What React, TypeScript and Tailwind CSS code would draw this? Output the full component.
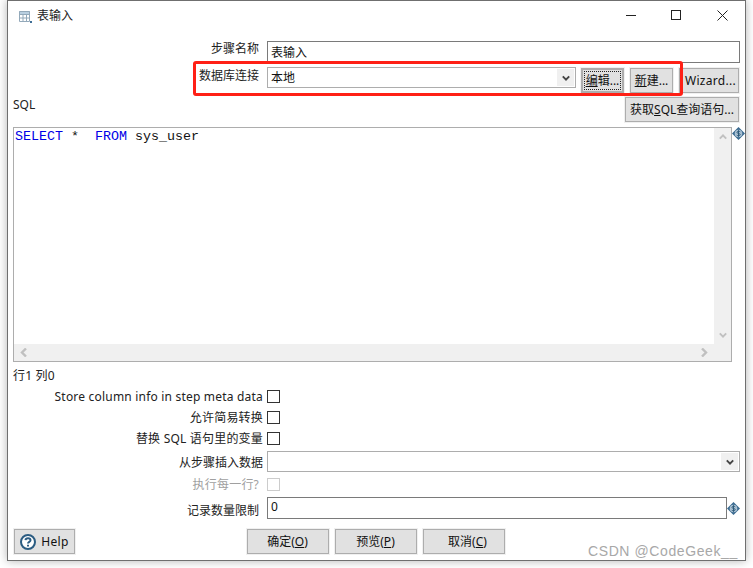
import type { ReactNode } from "react";

const cjk = "font-['Noto_Sans','Noto_Sans_CJK_SC',sans-serif]";

function VarIcon() {
  return (
    <svg width="13" height="13" viewBox="0 0 13 13" className="shrink-0">
      <path d="M6.5 0 13 6.5 6.5 13 0 6.5z" fill="#3a6a90" />
      <circle cx="6.5" cy="6.5" r="3.8" fill="#a9c0d2" />
      <path d="M8.2 4.8C7.6 4.2 5 4 5 5.4 5 7 8.2 6 8.2 7.6 8.2 9 5.4 8.8 4.8 8.2M6.5 3.2v6.6" fill="none" stroke="#2d5a7a" strokeWidth="1" />
    </svg>
  );
}

function Chevron({ dir = "down", color = "#555" }: { dir?: "down" | "up" | "left" | "right"; color?: string }) {
  const d = {
    down: "M1 1.5 5 5.5 9 1.5",
    up: "M1 5.5 5 1.5 9 5.5",
    left: "M6 0.5 2 4.5 6 8.5",
    right: "M2 0.5 6 4.5 2 8.5",
  }[dir];
  const vertical = dir === "down" || dir === "up";
  return (
    <svg width={8} height={vertical ? 6 : 9} viewBox={vertical ? "0 0 10 7" : "0 0 8 9"}>
      <path d={d} fill="none" stroke={color} strokeWidth="2.4" />
    </svg>
  );
}

function Button({ children, className = "" }: { children: ReactNode; className?: string }) {
  return (
    <div className={`h-[25px] flex items-center justify-center bg-[#e1e1e1] border border-[#adadad] outline outline-[#f0f0f0] text-[12px] text-[#111] ${className}`}>
      {children}
    </div>
  );
}

function Label({ children, muted = false, className = "pr-[4px]" }: { children: ReactNode; muted?: boolean; className?: string }) {
  return (
    <div className={`w-[259px] shrink-0 text-right text-[12px] leading-[16px] ${className} ${muted ? "text-[#a0a0a0]" : "text-[#222]"}`}>
      {children}
    </div>
  );
}

function Combo({ text, className = "" }: { text?: string; className?: string }) {
  return (
    <div className={`h-[21px] flex items-center justify-between border border-[#adadad] bg-white pl-[3px] pr-px text-[12px] text-[#111] ${className}`}>
      <span>{text}</span>
      <div className="w-[17px] h-[17px] bg-[#f0f0f0] flex items-center justify-center">
        <Chevron color="#444" />
      </div>
    </div>
  );
}

function CheckRow({ label, muted = false, className = "" }: { label: string; muted?: boolean; className?: string }) {
  return (
    <div className={`flex items-center h-[13px] ${className}`}>
      <Label muted={muted} className={`tracking-[0.2px] ${muted ? "pr-[8px]" : "pr-[4px]"}`}>{label}</Label>
      <div className={`w-[13px] h-[13px] border ${muted ? "border-[#ccc]" : "border-[#333]"} bg-white`} />
    </div>
  );
}

export default function App() {
  return (
    <div className={`w-[753px] h-[568px] bg-white overflow-hidden pl-[7px] ${cjk}`}>
      <div className="relative w-[739px] h-[561px] bg-white border border-[#6f6f6f] shadow-[0_0_9px_rgba(0,0,0,0.3)] flex flex-col">
        {/* title bar */}
        <div className="h-[40px] shrink-0 flex items-start">
          <svg width="13" height="13" viewBox="0 0 13 13" className="ml-[11px] mt-[10px]">
            <rect x="0" y="0" width="11" height="3.5" fill="#b9cfe0" />
            <path d="M.5.5h10v10H.5zM.5 3.5h10M4 3.5v7M7.5 3.5v7M.5 7h10" fill="none" stroke="#93a9ba" />
            <rect x="11" y="10" width="2" height="2" fill="#3f6f96" />
          </svg>
          <span className="ml-[5px] mt-[6px] text-[12px] leading-[18px] text-[#222]">表输入</span>
          <svg width="10" height="2" viewBox="0 0 10 2" className="ml-[553px] mt-[14px]">
            <rect width="10" height="1" fill="#222" />
          </svg>
          <svg width="10" height="10" viewBox="0 0 10 10" className="ml-[35px] mt-[9px]">
            <rect x=".5" y=".5" width="9" height="9" fill="none" stroke="#222" />
          </svg>
          <svg width="11" height="11" viewBox="0 0 11 11" className="ml-[36px] mt-[9px]">
            <path d="M.5.5l10 10M10.5.5l-10 10" stroke="#222" fill="none" />
          </svg>
        </div>

        {/* step name */}
        <div className="flex items-start h-[22px]">
          <Label className="pr-[8px]">步骤名称</Label>
          <div className="w-[473px] h-[22px] border border-[#7a7a7a] text-[12px] leading-[21px] pl-[3px] text-[#111]">表输入</div>
        </div>

        {/* connection */}
        <div className="flex items-start h-[26px] mt-[4px]">
          <Label className="pr-[8px] mt-px">数据库连接</Label>
          <Combo text="本地" className="w-[309px]" />
          <Button className="w-[43px] ml-[5px] mt-px border-2 border-[#0078d7]">
            <span className="border border-dotted border-[#222] w-[37px] h-[19px] flex items-center justify-center">
              <span><span className="underline">编</span>辑...</span>
            </span>
          </Button>
          <Button className="w-[43px] ml-[6px] mt-px"><span><span className="underline">新</span>建...</span></Button>
          <Button className="w-[60px] ml-[6px] mt-px pl-[3px] tracking-[0.3px]">Wizard...</Button>
        </div>

        {/* sql label + query button */}
        <div className="flex items-start justify-between h-[25px] mt-[4px] pl-[5px] pr-[6px]">
          <span className="text-[12px] leading-[16px] text-[#222]">SQL</span>
          <Button className="w-[114px]"><span>获取<span className="underline">S</span>QL查询语句...</span></Button>
        </div>

        {/* editor */}
        <div className="flex items-start mt-[5px] pl-[5px]">
          <div className="w-[719px] h-[235px] border border-[#adadad] flex flex-col">
            <div className="flex flex-1 min-h-0">
              <div className="flex-1 pl-px pt-px font-['Liberation_Mono',monospace] text-[13.33px] leading-[15px] whitespace-pre text-[#111]">
                <span className="text-[#0000e6]">SELECT</span> *  <span className="text-[#0000e6]">FROM</span> sys_user
              </div>
              <div className="w-[17px] flex flex-col justify-between items-center bg-[#f0f0f0] py-[6px]">
                <Chevron dir="up" color="#c0c0c0" />
                <Chevron color="#c0c0c0" />
              </div>
            </div>
            <div className="h-[17px] bg-[#f0f0f0] flex items-center justify-between pl-[6px] pr-[23px]">
              <Chevron dir="left" color="#c0c0c0" />
              <Chevron dir="right" color="#c0c0c0" />
            </div>
          </div>
          <VarIcon />
        </div>

        <div className="pl-[5px] mt-[6px] text-[12px] leading-[16px] text-[#222] tracking-[0.2px]">行1 列0</div>

        <CheckRow label="Store column info in step meta data" className="mt-[6px]" />
        <CheckRow label="允许简易转换" className="mt-[8px]" />
        <CheckRow label="替换 SQL 语句里的变量" className="mt-[8px]" />

        <div className="flex items-start mt-[6px]">
          <Label className="pr-[4px] mt-[4px]">从步骤插入数据</Label>
          <Combo className="w-[473px]" />
        </div>

        <CheckRow label="执行每一行?" muted className="mt-[6px]" />

        <div className="flex items-start mt-[6px]">
          <Label className="pr-[8px] mt-[6px]">记录数量限制</Label>
          <div className="w-[460px] h-[22px] border border-[#7a7a7a] text-[12px] leading-[18px] pl-[3px] text-[#111]">0</div>
          <div className="mt-[5px]"><VarIcon /></div>
        </div>

        {/* footer */}
        <div className="flex items-start mt-[10px] pl-[6px]">
          <Button className="w-[61px] gap-[5px] tracking-[0.4px]">
            <svg width="16" height="16" viewBox="0 0 16 16">
              <circle cx="8" cy="8" r="7" fill="white" stroke="#2b5c82" strokeWidth="2" />
              <path d="M5.5 6.2C5.7 3.6 10.5 3.6 10.5 6.2 10.5 8 8 7.8 8 9.6M8 10.8v1.8" fill="none" stroke="#2b5c82" strokeWidth="2" />
            </svg>
            Help
          </Button>
          <Button className="w-[82px] ml-[172px] pr-px"><span>确定(<span className="underline">O</span>)</span></Button>
          <Button className="w-[82px] ml-[6px] pr-px"><span>预览(<span className="underline">P</span>)</span></Button>
          <Button className="w-[82px] ml-[6px] pl-[7px]"><span>取消(<span className="underline">C</span>)</span></Button>
        </div>

        {/* annotation over the connection row */}
        <div className="absolute left-[185px] top-[60px] w-[490px] h-[35px] border-[3px] border-[#ff2016] rounded-[3px] pointer-events-none" />
        {/* watermark */}
        <div className="absolute left-[580px] top-[541px] text-[14px] leading-[18px] tracking-[0.6px] text-[#a8a8a8] font-['Liberation_Sans',sans-serif] whitespace-pre">CSDN @CodeGeek__</div>
      </div>
    </div>
  );
}
